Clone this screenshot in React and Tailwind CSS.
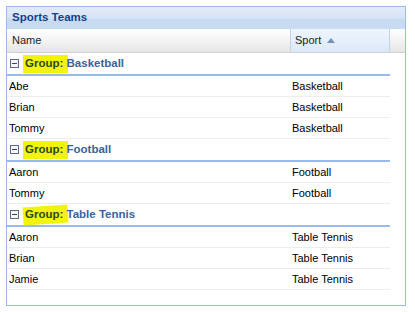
import React from 'react';

const groups = [
  {
    name: 'Basketball',
    tilt: '',
    rows: ['Abe', 'Brian', 'Tommy'],
  },
  {
    name: 'Football',
    tilt: '',
    rows: ['Aaron', 'Tommy'],
  },
  {
    name: 'Table Tennis',
    tilt: '-rotate-[4deg]',
    rows: ['Aaron', 'Brian', 'Jamie'],
  },
];

const MinusBox = () => (
  <svg width="9" height="9" viewBox="0 0 9 9" className="shrink-0">
    <rect x="0.5" y="0.5" width="8" height="8" fill="#f4f6f9" stroke="#5f6b7c" />
    <line x1="2" y1="4.5" x2="7" y2="4.5" stroke="#3a4454" strokeWidth="1" />
  </svg>
);

export default function App() {
  return (
    <div className="h-[312px] w-[415px] bg-white pl-[6px] pt-[6px] font-['Liberation_Sans',Arial,sans-serif]">
      <div className="flex h-[300px] w-[400px] flex-col border border-[#99bbe8] bg-white">
        {/* panel title */}
        <div className="flex h-[22px] items-center bg-[linear-gradient(#e2ebf7,#d7e4f5_50%,#c7d9f0_58%,#cadcf1)] pl-[5px] text-[11.5px] font-bold text-[#15428b]">
          Sports Teams
        </div>

        {/* column headers */}
        <div className="flex h-[24px] border-b border-[#d0d0d0] text-[11px] text-[#222]">
          <div className="flex w-[283px] items-center bg-gradient-to-b from-white via-[#f3f3f3] to-[#e5e5e5] pl-[5px]">
            Name
          </div>
          <div className="flex w-[100px] items-center gap-[6px] border-x border-[#c3d4ea] bg-gradient-to-b from-[#eef4fd] to-[#dde9f8] pl-[4px]">
            Sport
            <svg width="8" height="5" viewBox="0 0 8 5">
              <polygon points="4,0 8,5 0,5" fill="#7592bd" />
            </svg>
          </div>
          <div className="flex-1 bg-gradient-to-b from-white via-[#f3f3f3] to-[#e5e5e5]" />
        </div>

        {/* grouped body */}
        <div className="w-[383px]">
          {groups.map((g) => (
            <div key={g.name}>
              <div className="flex h-[23px] items-center gap-[6px] border-b-2 border-[#99bbe8] pl-[3px] text-[11.5px] font-bold text-[#3764a0]">
                <MinusBox />
                <span>
                  <span className="relative">
                    <span
                      className={`absolute left-[-2px] top-[-2px] h-[18px] w-[45px] bg-[#f2f40a] ${g.tilt}`}
                    />
                    <span className="relative text-[#2c4a1e]">Group: </span>
                  </span>
                  <span className="relative">{g.name}</span>
                </span>
              </div>
              {g.rows.map((r, i) => (
                <div
                  key={r + i}
                  className="flex h-[21px] items-center border-b border-[#ededed] text-[11px] text-black"
                >
                  <div className="w-[283px] pl-[2px]">{r}</div>
                  <div className="w-[100px] pl-[2px]">{g.name}</div>
                </div>
              ))}
            </div>
          ))}
        </div>
      </div>
    </div>
  );
}
